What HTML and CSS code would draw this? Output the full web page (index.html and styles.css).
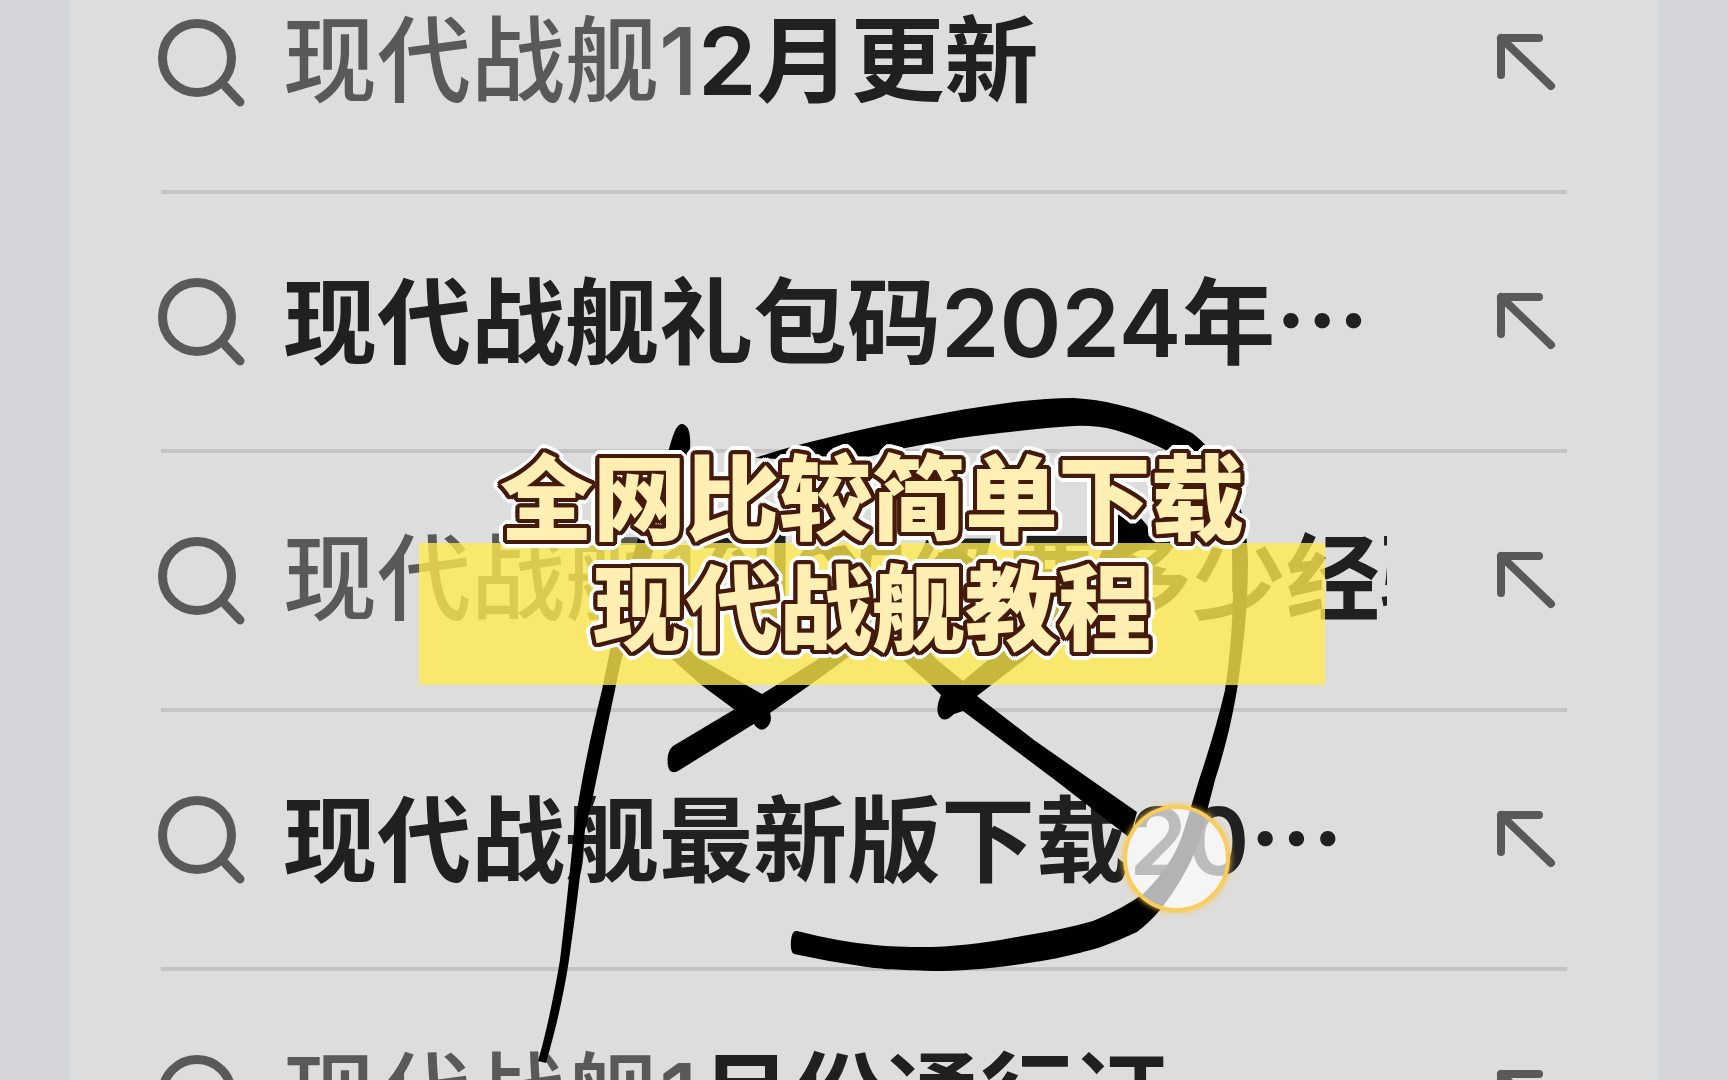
FILE: index.html
```
<!DOCTYPE html>
<html lang="zh-CN">
<head>
    <meta charset="UTF-8">
    <meta name="viewport" content="width=device-width, initial-scale=1.0">
    <title>全网比较简单下载现代战舰教程</title>
    <link rel="stylesheet" href="styles.css">
</head>
<body>

    <!-- Icons -->
    <svg class="sprite" aria-hidden="true">
        <symbol id="icon-search" viewBox="0 0 90 92">
            <circle cx="40" cy="41" r="34.5" fill="none" stroke="currentColor" stroke-width="9"/>
            <path d="M65 66L83 85" fill="none" stroke="currentColor" stroke-width="9" stroke-linecap="round"/>
        </symbol>
        <symbol id="icon-fill" viewBox="0 0 62 60">
            <path d="M6 42V5H44M6 5L56 53" fill="none" stroke="currentColor" stroke-width="8" stroke-linecap="round" stroke-linejoin="round"/>
        </symbol>
    </svg>

    <main class="panel">
        <ul class="suggestions">
            <li class="suggestion">
                <svg class="icon-search"><use href="#icon-search"/></svg>
                <a class="text" href="#"><span class="typed">现代战舰1</span>2月更新</a>
                <button class="fill" aria-label="填入"><svg><use href="#icon-fill"/></svg></button>
            </li>
            <li class="suggestion">
                <svg class="icon-search"><use href="#icon-search"/></svg>
                <a class="text" href="#">现代战舰礼包码2024年<span class="more">…</span></a>
                <button class="fill" aria-label="填入"><svg><use href="#icon-fill"/></svg></button>
            </li>
            <li class="suggestion">
                <svg class="icon-search"><use href="#icon-search"/></svg>
                <a class="text" href="#"><span class="typed">现代战舰1</span>到25级要多少经验</a>
                <button class="fill" aria-label="填入"><svg><use href="#icon-fill"/></svg></button>
            </li>
            <li class="suggestion">
                <svg class="icon-search"><use href="#icon-search"/></svg>
                <a class="text" href="#">现代战舰最新版下载20<span class="more">…</span></a>
                <button class="fill" aria-label="填入"><svg><use href="#icon-fill"/></svg></button>
            </li>
            <li class="suggestion">
                <svg class="icon-search"><use href="#icon-search"/></svg>
                <a class="text" href="#"><span class="typed">现代战舰1</span>月份通行证</a>
                <button class="fill" aria-label="填入"><svg><use href="#icon-fill"/></svg></button>
            </li>
        </ul>
    </main>

    <!-- Brush strokes -->
    <svg class="drawing" viewBox="0 0 1728 1080" aria-hidden="true">
        <path d="M669 449C674 431 677 424 682 424C689 425 691 434 690 449C680 480 660 530 650 560C630 620 620 665 615 690C602 750 592 805 585 830C580 880 574 925 569 960C563 1000 554 1035 546 1063L538 1061C547 1030 554 995 560 960C566 910 570 870 574 830C582 775 592 730 602 690C612 640 623 590 636 545Z"/>
        <path d="M755 458C790 446 830 437 860 430C905 420 950 411 1000 404Q1040 398 1074 398C1105 400 1130 407 1150 414Q1175 424 1192 433C1225 458 1247 505 1248 560C1248 610 1243 650 1237 690C1230 730 1223 755 1215 780L1206 815C1200 850 1180 885 1160 910Q1150 922 1137 932Q1120 940 1101 947C1070 956 1050 960 1028 963C990 969 960 971 932 971C900 970 880 969 867 967Q830 962 794 954Q790 952 791 940Q792 930 797 931Q840 942 875 945C895 947 915 947 932 947C970 946 1000 940 1028 935Q1065 929 1093 921Q1122 909 1143 894C1166 872 1178 850 1184 830L1199 780C1209 750 1218 720 1225 690C1231 650 1234 610 1233 560C1230 510 1205 468 1172 453Q1140 437 1115 430Q1095 425 1074 426C1030 429 990 434 960 438Q920 445 890 451L850 462Z"/>
        <path d="M646 636L700 684L735 710L753 723Q760 733 766 728Q773 722 770 713L810 685L850 656L975 560L950 545L817 660L762 694L695 656L665 622Z"/>
        <path d="M735 709L673 746Q666 752 668 766Q670 775 678 771L757 722Z"/>
        <path d="M820 550L903 660L931 685L941 695Q935 709 939 716Q944 724 954 714L963 711L1055 780L1130 838L1137 812L1034 740L977 696L1024 660L1130 555L1160 540L1125 500L1098 560L1000 650L963 681L935 658L845 545Z"/>
    </svg>

    <!-- Touch point -->
    <div class="touch"></div>

    <div class="highlight"></div>
    <h1 class="caption">全网比较简单下载<br>现代战舰教程</h1>

</body>
</html>
```
FILE: styles.css
```
* {
    box-sizing: border-box;
}
body {
    margin: 0;
    height: 100vh;
    overflow: hidden;
    position: relative;
    background-color: #d4d6d9;
    font-family: Inter, "Noto Sans CJK SC", sans-serif;
}
.sprite {
    display: none;
}
.panel {
    height: 100%;
    margin: 0 70px;
    padding: 0 91px;
    overflow: hidden;
    background-color: #dddddd;
}
/* the list is scrolled a little way down */
.suggestions {
    list-style: none;
    margin: -65px 0 0;
    padding: 0;
}
.suggestion {
    display: flex;
    align-items: center;
    height: 259px;
    border-bottom: 4px solid #c4c4c4;
    color: #595959;
}
.icon-search {
    flex: none;
    width: 90px;
    height: 92px;
    margin-left: -4px;
    margin-right: 36px;
}
.text {
    flex: 1;
    overflow: hidden;
    padding-bottom: 4px;
    white-space: nowrap;
    color: #202020;
    font-size: 94px;
    font-weight: 600;
    line-height: 140px;
    text-decoration: none;
}
.typed {
    color: #595959;
    font-weight: 500;
}
.more {
    font-family: "Noto Sans CJK SC", sans-serif;
}
.fill {
    flex: none;
    width: 62px;
    height: 60px;
    margin-left: 108px;
    margin-right: 10px;
    padding: 0;
    border: 0;
    background: none;
    color: #595959;
}
.fill svg {
    display: block;
    width: 100%;
    height: 100%;
}
.drawing {
    position: absolute;
    top: 0;
    left: 0;
    width: 100%;
    height: 100%;
}
.touch {
    position: absolute;
    top: 805px;
    left: 1123px;
    width: 107px;
    height: 107px;
    border: 4px solid #f9cc5c;
    border-radius: 50%;
    background-color: rgba(255, 255, 255, 0.7);
    box-shadow: 0 0 6px #f6c544;
}
.highlight {
    position: absolute;
    top: 543px;
    left: 419px;
    width: 906px;
    height: 142px;
    background-color: rgba(255, 234, 78, 0.78);
}
.caption {
    position: absolute;
    top: 438px;
    left: 419px;
    width: 906px;
    margin: 0;
    color: #ffefb3;
    font-family: "Noto Sans CJK SC", sans-serif;
    font-size: 93px;
    font-weight: 900;
    line-height: 110px;
    text-align: center;
    white-space: nowrap;
    /* brown outline */
    text-shadow: 4px 0 #431a0c, -4px 0 #431a0c, 0 4px #431a0c, 0 -4px #431a0c,
        3px 3px #431a0c, -3px 3px #431a0c, 3px -3px #431a0c, -3px -3px #431a0c,
        4px 2px #431a0c, -4px 2px #431a0c, 4px -2px #431a0c, -4px -2px #431a0c,
        2px 4px #431a0c, -2px 4px #431a0c, 2px -4px #431a0c, -2px -4px #431a0c;
    /* white outline around the brown one */
    filter: drop-shadow(2px 2px 0 #fff) drop-shadow(-2px -2px 0 #fff)
        drop-shadow(2px -2px 0 #fff) drop-shadow(-2px 2px 0 #fff);
}
```
